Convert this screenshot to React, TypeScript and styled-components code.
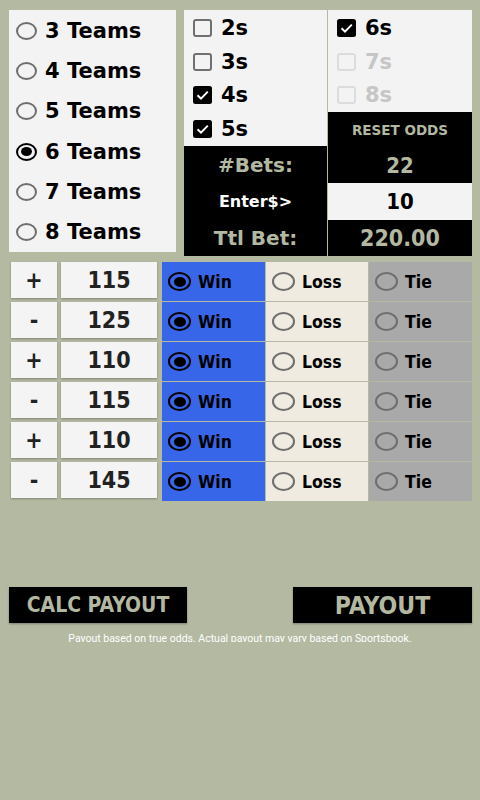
import React from "react";
import styled, { createGlobalStyle } from "styled-components";

const BG = "#b4b9a2";
const MUTED = "#b3b8a0";
const PANEL = "#f3f3f3";
const NARROW = `"DejaVu Sans Condensed", "DejaVu Sans", "Liberation Sans", sans-serif`;

const GlobalStyle = createGlobalStyle`
  html, body { margin: 0; padding: 0; background: ${BG}; }
  body { font-family: "DejaVu Sans", "Liberation Sans", sans-serif; }
  * { box-sizing: border-box; }
`;

const Screen = styled.div`
  width: 480px;
  height: 800px;
  background: ${BG};
  display: flex;
  flex-direction: column;
  overflow: hidden;
`;

/* ---------- top: team count, parlay sizes, totals ---------- */

const Top = styled.div`
  display: flex;
  align-items: flex-start;
  padding: 10px 0 0 9px;
`;

const TeamPanel = styled.div`
  width: 167px;
  height: 242px;
  background: ${PANEL};
  display: flex;
  flex-direction: column;
  padding: 1px 0 0 7px;
`;

const TeamOption = styled.div`
  flex: 1;
  display: flex;
  align-items: center;
  gap: 8px;
  font-size: 21px;
  font-weight: 700;
  color: #000;
`;

const Radio = styled.span<{ $on?: boolean; $size?: "sm" | "md" }>`
  flex: none;
  width: ${(p) => (p.$size === "md" ? 23 : 21)}px;
  height: ${(p) => (p.$size === "md" ? 19 : 18)}px;
  border-radius: 50%;
  border: ${(p) => (p.$on ? "2.5px solid #000" : "2px solid #6e6e6e")};
  display: flex;
  align-items: center;
  justify-content: center;
  &::after {
    content: "";
    display: ${(p) => (p.$on ? "block" : "none")};
    width: ${(p) => (p.$size === "md" ? 12 : 11)}px;
    height: ${(p) => (p.$size === "md" ? 10 : 9)}px;
    border-radius: 50%;
    background: #000;
  }
`;

const Column = styled.div<{ $gap: number; $width: number }>`
  margin-left: ${(p) => p.$gap}px;
  width: ${(p) => p.$width}px;
  display: flex;
  flex-direction: column;
`;

const CheckArea = styled.div<{ $height: number }>`
  height: ${(p) => p.$height}px;
  background: ${PANEL};
  display: flex;
  flex-direction: column;
  padding: 1px 0 0 9px;
`;

const CheckOption = styled.div<{ $disabled?: boolean }>`
  height: 34px;
  display: flex;
  align-items: center;
  gap: 9px;
  font-size: 21px;
  font-weight: 700;
  color: ${(p) => (p.$disabled ? "#c6c6c6" : "#000")};
`;

const Band = styled.div<{ $height: number; $light?: boolean }>`
  height: ${(p) => p.$height}px;
  background: ${(p) => (p.$light ? PANEL : "#000")};
  display: flex;
  align-items: center;
  justify-content: center;
  font-weight: 700;
`;

const Label = styled.span<{ $size: number; $color: string; $narrow?: boolean }>`
  font-size: ${(p) => p.$size}px;
  color: ${(p) => p.$color};
  font-family: ${(p) => (p.$narrow ? NARROW : "inherit")};
`;

/* ---------- bet rows ---------- */

const Rows = styled.div`
  margin-top: 6px;
  padding-left: 11px;
  display: flex;
  flex-direction: column;
  gap: 1px;
`;

const Row = styled.div`
  display: flex;
  align-items: flex-start;
  height: 39px;
`;

const Key = styled.div<{ $width: number; $gap: number }>`
  margin-left: ${(p) => p.$gap}px;
  width: ${(p) => p.$width}px;
  height: 36px;
  background: #f4f4f4;
  box-shadow: 0 1px 2px rgba(0, 0, 0, 0.28);
  display: flex;
  align-items: center;
  justify-content: center;
  font-family: ${NARROW};
  font-size: 23px;
  font-weight: 700;
  color: #222;
`;

const Result = styled.div<{ $bg: string; $width: number; $gap: number }>`
  margin-left: ${(p) => p.$gap}px;
  width: ${(p) => p.$width}px;
  height: 39px;
  background: ${(p) => p.$bg};
  display: flex;
  align-items: center;
  gap: 7px;
  padding-left: 6px;
  font-family: ${NARROW};
  font-size: 17.5px;
  font-weight: 700;
  color: #000;
`;

/* ---------- footer ---------- */

const Actions = styled.div`
  margin-top: 86px;
  display: flex;
  justify-content: space-between;
  padding: 0 8px 0 9px;
`;

const ActionButton = styled.div<{ $width: number; $size: number }>`
  width: ${(p) => p.$width}px;
  height: 36px;
  background: #000;
  color: ${MUTED};
  font-family: ${NARROW};
  font-size: ${(p) => p.$size}px;
  font-weight: 700;
  display: flex;
  align-items: center;
  justify-content: center;
  box-shadow: 0 1px 2px rgba(0, 0, 0, 0.3);
`;

const Note = styled.div`
  margin-top: 9px;
  height: 10px;
  overflow: hidden;
  text-align: center;
  font-family: Roboto, "Liberation Sans", sans-serif;
  font-size: 10.5px;
  line-height: 13px;
  color: #fff;
`;

const Box = ({ checked, disabled }: { checked?: boolean; disabled?: boolean }) => (
  <svg width="19" height="18" viewBox="0 0 19 18" style={{ flex: "none" }}>
    {checked ? (
      <>
        <rect x="0" y="0" width="19" height="18" rx="2.5" fill="#000" />
        <polyline points="4.5,9.2 8,12.6 14.8,5.6" fill="none" stroke="#fff" strokeWidth="2" />
      </>
    ) : (
      <rect
        x="1"
        y="1"
        width="17"
        height="16"
        rx="2"
        fill="none"
        stroke={disabled ? "#dcdcdc" : "#707070"}
        strokeWidth="2"
      />
    )}
  </svg>
);

const teams = [3, 4, 5, 6, 7, 8];
const bets = [
  { sign: "+", odds: 115 },
  { sign: "-", odds: 125 },
  { sign: "+", odds: 110 },
  { sign: "-", odds: 115 },
  { sign: "+", odds: 110 },
  { sign: "-", odds: 145 },
];

export default function App() {
  return (
    <Screen>
      <GlobalStyle />
      <Top>
        <TeamPanel>
          {teams.map((n) => (
            <TeamOption key={n}>
              <Radio $on={n === 6} />
              {n} Teams
            </TeamOption>
          ))}
        </TeamPanel>

        <Column $gap={8} $width={143}>
          <CheckArea $height={136}>
            <CheckOption>
              <Box />
              2s
            </CheckOption>
            <CheckOption>
              <Box />
              3s
            </CheckOption>
            <CheckOption>
              <Box checked />
              4s
            </CheckOption>
            <CheckOption>
              <Box checked />
              5s
            </CheckOption>
          </CheckArea>
          <Band $height={37}>
            <Label $size={20} $color={MUTED}>#Bets:</Label>
          </Band>
          <Band $height={37}>
            <Label $size={16} $color="#fff">Enter$&gt;</Label>
          </Band>
          <Band $height={36}>
            <Label $size={20} $color={MUTED}>Ttl Bet:</Label>
          </Band>
        </Column>

        <Column $gap={1} $width={144}>
          <CheckArea $height={102}>
            <CheckOption>
              <Box checked />
              6s
            </CheckOption>
            <CheckOption $disabled>
              <Box disabled />
              7s
            </CheckOption>
            <CheckOption $disabled>
              <Box disabled />
              8s
            </CheckOption>
          </CheckArea>
          <Band $height={35}>
            <Label $size={13.5} $color={MUTED}>RESET ODDS</Label>
          </Band>
          <Band $height={36}>
            <Label $size={22} $color={MUTED} $narrow>22</Label>
          </Band>
          <Band $height={37} $light>
            <Label $size={22} $color="#000" $narrow>10</Label>
          </Band>
          <Band $height={36}>
            <Label $size={23} $color={MUTED} $narrow>220.00</Label>
          </Band>
        </Column>
      </Top>

      <Rows>
        {bets.map((b, i) => (
          <Row key={i}>
            <Key $width={46} $gap={0}>{b.sign}</Key>
            <Key $width={96} $gap={4}>{b.odds}</Key>
            <Result $bg="#3866e8" $width={103} $gap={5}>
              <Radio $on $size="md" />
              Win
            </Result>
            <Result $bg="#efebe0" $width={102} $gap={1}>
              <Radio $size="md" />
              Loss
            </Result>
            <Result $bg="#a9a9a9" $width={103} $gap={1}>
              <Radio $size="md" />
              Tie
            </Result>
          </Row>
        ))}
      </Rows>

      <Actions>
        <ActionButton $width={178} $size={21}>CALC PAYOUT</ActionButton>
        <ActionButton $width={179} $size={24.5}>PAYOUT</ActionButton>
      </Actions>
      <Note>Payout based on true odds. Actual payout may vary based on Sportsbook.</Note>
    </Screen>
  );
}
